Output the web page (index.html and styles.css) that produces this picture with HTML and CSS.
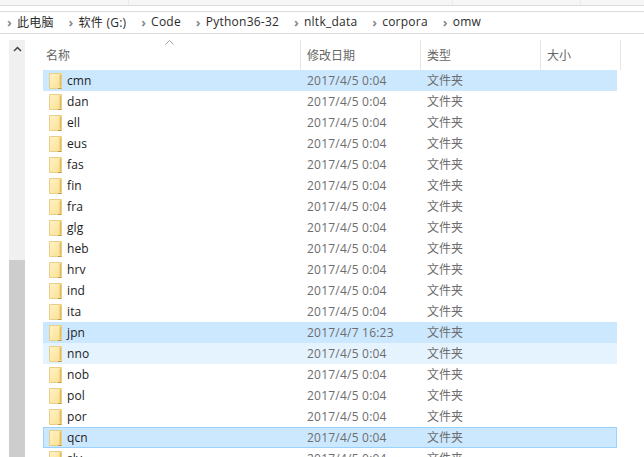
FILE: index.html
```html
<!DOCTYPE html>
<html lang="zh">
<head>
<meta charset="utf-8">
<title>omw</title>
<link rel="stylesheet" href="styles.css">
</head>
<body>
<svg class="defs" width="0" height="0" aria-hidden="true">
  <defs>
    <linearGradient id="fold" x1="0" y1="0" x2="1" y2="1">
      <stop offset="0" stop-color="#fff3c4"/>
      <stop offset="1" stop-color="#fbdf92"/>
    </linearGradient>
    <symbol id="folder" viewBox="0 0 13 16">
      <path d="M.5.5h12v15H.5z" fill="url(#fold)" stroke="#e8cf88"/>
      <path d="M11.300 1.500v13" stroke="#e6bd5e" fill="none" stroke-width="1.400"/>
      <path d="M9 15.500h3.500" stroke="#b99a4f" fill="none"/>
    </symbol>
  </defs>
</svg>
<div class="ribbon-edge">
  <div class="ribbon-seg ribbon-a"></div>
  <div class="ribbon-seg ribbon-b"></div>
  <div class="ribbon-seg ribbon-c"></div>
</div>
<nav class="address">
  <span class="sep">›</span><span class="crumb">此电脑</span>
  <span class="sep">›</span><span class="crumb">软件 (G:)</span>
  <span class="sep">›</span><span class="crumb">Code</span>
  <span class="sep">›</span><span class="crumb">Python36-32</span>
  <span class="sep">›</span><span class="crumb">nltk_data</span>
  <span class="sep">›</span><span class="crumb">corpora</span>
  <span class="sep">›</span><span class="crumb">omw</span>
</nav>
<main class="main">
  <aside class="scrollbar">
    <div class="track"><svg class="arrow" width="9" height="6" viewBox="0 0 9 6"><path d="M1 5l3.500-3.500L8 5" fill="none" stroke="#444" stroke-width="1.500"/></svg></div>
    <div class="thumb"></div>
  </aside>
  <section class="list">
    <div class="sort"><svg width="9" height="5" viewBox="0 0 9 5"><path d="M.5 4.500l4-4 4 4" fill="none" stroke="#a0a0a0"/></svg></div>
    <header class="head">
      <div class="h h-name">名称</div>
      <div class="h h-date">修改日期</div>
      <div class="h h-type">类型</div>
      <div class="h h-size">大小</div>
    </header>
    <div class="rows">
      <div class="row sel"><svg class="ico"><use href="#folder"/></svg><span class="name">cmn</span><span class="date">2017/4/5 0:04</span><span class="type">文件夹</span></div>
      <div class="row"><svg class="ico"><use href="#folder"/></svg><span class="name">dan</span><span class="date">2017/4/5 0:04</span><span class="type">文件夹</span></div>
      <div class="row"><svg class="ico"><use href="#folder"/></svg><span class="name">ell</span><span class="date">2017/4/5 0:04</span><span class="type">文件夹</span></div>
      <div class="row"><svg class="ico"><use href="#folder"/></svg><span class="name">eus</span><span class="date">2017/4/5 0:04</span><span class="type">文件夹</span></div>
      <div class="row"><svg class="ico"><use href="#folder"/></svg><span class="name">fas</span><span class="date">2017/4/5 0:04</span><span class="type">文件夹</span></div>
      <div class="row"><svg class="ico"><use href="#folder"/></svg><span class="name">fin</span><span class="date">2017/4/5 0:04</span><span class="type">文件夹</span></div>
      <div class="row"><svg class="ico"><use href="#folder"/></svg><span class="name">fra</span><span class="date">2017/4/5 0:04</span><span class="type">文件夹</span></div>
      <div class="row"><svg class="ico"><use href="#folder"/></svg><span class="name">glg</span><span class="date">2017/4/5 0:04</span><span class="type">文件夹</span></div>
      <div class="row"><svg class="ico"><use href="#folder"/></svg><span class="name">heb</span><span class="date">2017/4/5 0:04</span><span class="type">文件夹</span></div>
      <div class="row"><svg class="ico"><use href="#folder"/></svg><span class="name">hrv</span><span class="date">2017/4/5 0:04</span><span class="type">文件夹</span></div>
      <div class="row"><svg class="ico"><use href="#folder"/></svg><span class="name">ind</span><span class="date">2017/4/5 0:04</span><span class="type">文件夹</span></div>
      <div class="row"><svg class="ico"><use href="#folder"/></svg><span class="name">ita</span><span class="date">2017/4/5 0:04</span><span class="type">文件夹</span></div>
      <div class="row sel"><svg class="ico"><use href="#folder"/></svg><span class="name">jpn</span><span class="date">2017/4/7 16:23</span><span class="type">文件夹</span></div>
      <div class="row hover"><svg class="ico"><use href="#folder"/></svg><span class="name">nno</span><span class="date">2017/4/5 0:04</span><span class="type">文件夹</span></div>
      <div class="row"><svg class="ico"><use href="#folder"/></svg><span class="name">nob</span><span class="date">2017/4/5 0:04</span><span class="type">文件夹</span></div>
      <div class="row"><svg class="ico"><use href="#folder"/></svg><span class="name">pol</span><span class="date">2017/4/5 0:04</span><span class="type">文件夹</span></div>
      <div class="row"><svg class="ico"><use href="#folder"/></svg><span class="name">por</span><span class="date">2017/4/5 0:04</span><span class="type">文件夹</span></div>
      <div class="row sel focus"><svg class="ico"><use href="#folder"/></svg><span class="name">qcn</span><span class="date">2017/4/5 0:04</span><span class="type">文件夹</span></div>
      <div class="row"><svg class="ico"><use href="#folder"/></svg><span class="name">slv</span><span class="date">2017/4/5 0:04</span><span class="type">文件夹</span></div>
    </div>
  </section>
</main>
</body>
</html>
```
FILE: styles.css
```css
html, body {
  margin: 0;
  padding: 0;
  height: 457px;
  overflow: hidden;
  background: #fff;
}
body {
  font-family: "Open Sans", "Noto Sans CJK SC", sans-serif;
  font-size: 12px;
  color: #333;
}
.defs { display: block; height: 0; }
.ribbon-edge {
  height: 5px;
  display: flex;
  background: #f6f6f6;
  border-bottom: 1px solid #dcdcdc;
  margin-bottom: 5px;
}
.ribbon-seg {
  box-sizing: border-box;
  flex: none;
  border-right: 1px solid #ececec;
}
.ribbon-a { width: 129px; }
.ribbon-b { width: 324px; }
.ribbon-c { width: 128px; }
.address {
  height: 21px;
  border-top: 1px solid #dcdcdc;
  border-bottom: 1px solid #dcdcdc;
  display: flex;
  align-items: center;
  padding-left: 2px;
  color: #2b2b2b;
}
.crumb {
  margin-right: 9.750px;
  position: relative;
  top: -1px;
  letter-spacing: .25px;
}
.sep {
  width: 15px;
  text-align: center;
  color: #8a8a8a;
  font-size: 13px;
  font-weight: 700;
  position: relative;
  top: -1px;
}
.main {
  display: flex;
  height: 423px;
}
.scrollbar {
  width: 16px;
  margin: 6px 0 0 9px;
  display: flex;
  flex-direction: column;
  flex: none;
}
.track {
  height: 220px;
  background: #f0f0f0;
  display: flex;
  justify-content: center;
  padding-top: 6px;
  box-sizing: border-box;
}
.arrow { display: block; }
.thumb { flex: 1; background: #cdcdcd; }
.list {
  position: relative;
  margin-left: 18px;
  width: 574px;
  padding-top: 6px;
}
.sort {
  position: absolute;
  left: 122px;
  top: 6px;
  line-height: 0;
}
.head {
  display: flex;
  height: 30px;
  color: #666;
}
.h {
  box-sizing: border-box;
  flex: none;
  width: 120px;
  padding: 6px 0 0 6px;
  border-right: 1px solid #e6e6e6;
  line-height: 20px;
}
.h-name { width: 258px; padding-left: 3px; }
.h-size { width: 80px; }
.rows { display: flex; flex-direction: column; }
.row {
  flex: none;
  box-sizing: border-box;
  height: 21px;
  display: flex;
  align-items: center;
  line-height: 21px;
}
.row.sel { background: #cce8ff; }
.row.hover { background: #e5f3ff; }
.row.focus { border: 1px solid #99d1ff; }
.row.focus .ico { margin-left: 5px; }
.ico { width: 13px; height: 16px; margin-left: 6px; flex: none; }
.name { width: 240px; margin-left: 5px; color: #222; letter-spacing: .1px; }
.date { width: 120px; color: #6d6d6d; letter-spacing: .22px; }
.type { color: #6d6d6d; }
```
